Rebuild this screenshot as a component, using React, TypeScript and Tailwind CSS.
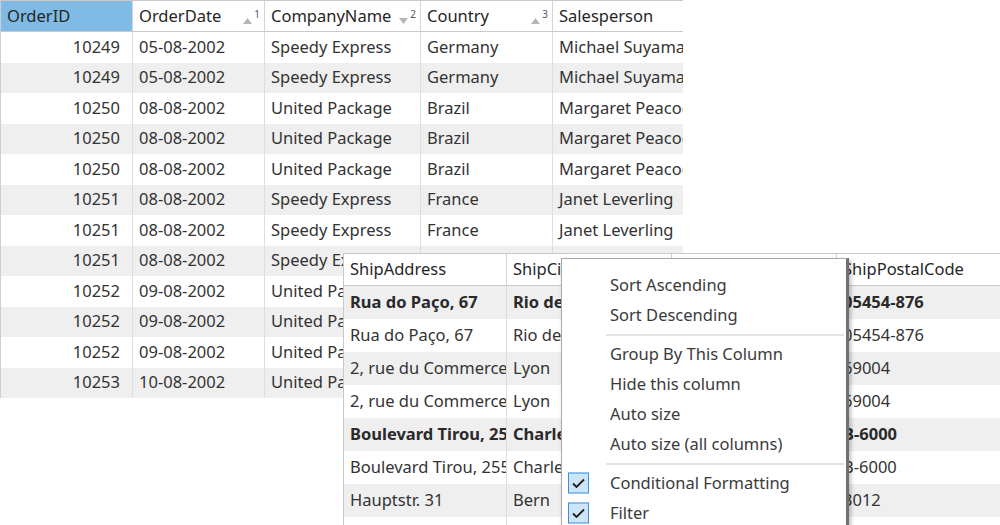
const font = { fontFamily: '"Noto Sans", "Open Sans", sans-serif' }

type Order = [string, string, string, string, string]

const orders: Order[] = [
  ['10249', '05-08-2002', 'Speedy Express', 'Germany', 'Michael Suyama'],
  ['10249', '05-08-2002', 'Speedy Express', 'Germany', 'Michael Suyama'],
  ['10250', '08-08-2002', 'United Package', 'Brazil', 'Margaret Peacock'],
  ['10250', '08-08-2002', 'United Package', 'Brazil', 'Margaret Peacock'],
  ['10250', '08-08-2002', 'United Package', 'Brazil', 'Margaret Peacock'],
  ['10251', '08-08-2002', 'Speedy Express', 'France', 'Janet Leverling'],
  ['10251', '08-08-2002', 'Speedy Express', 'France', 'Janet Leverling'],
  ['10251', '08-08-2002', 'Speedy Express', 'France', 'Janet Leverling'],
  ['10252', '09-08-2002', 'United Package', 'Belgium', 'Margaret Peacock'],
  ['10252', '09-08-2002', 'United Package', 'Belgium', 'Margaret Peacock'],
  ['10252', '09-08-2002', 'United Package', 'Belgium', 'Margaret Peacock'],
  ['10253', '10-08-2002', 'United Package', 'Brazil', 'Margaret Peacock'],
]

type Ship = { addr: string; city: string; region: string; code: string; bold?: boolean }

const ships: Ship[] = [
  { addr: 'Rua do Paço, 67', city: 'Rio de Janeiro', region: 'RJ', code: '05454-876', bold: true },
  { addr: 'Rua do Paço, 67', city: 'Rio de Janeiro', region: 'RJ', code: '05454-876' },
  { addr: '2, rue du Commerce', city: 'Lyon', region: '', code: '69004' },
  { addr: '2, rue du Commerce', city: 'Lyon', region: '', code: '69004' },
  { addr: 'Boulevard Tirou, 255', city: 'Charleroi', region: '', code: 'B-6000', bold: true },
  { addr: 'Boulevard Tirou, 255', city: 'Charleroi', region: '', code: 'B-6000' },
  { addr: 'Hauptstr. 31', city: 'Bern', region: '', code: '3012' },
  { addr: '', city: '', region: '', code: '' },
]

function SortMark({ dir, n }: { dir: 'up' | 'down'; n: number }) {
  return (
    <span className="ml-auto flex items-start gap-[2px] pr-[4px]">
      <svg width="9" height="6" viewBox="0 0 9 6" className="mt-[9px]">
        {dir === 'up' ? (
          <path d="M0 6 L4.5 0 L9 6 Z" fill="#b5b5b5" />
        ) : (
          <path d="M0 0 L4.5 6 L9 0 Z" fill="#b5b5b5" />
        )}
      </svg>
      <span className="text-[10px] leading-none text-[#555]">{n}</span>
    </span>
  )
}

function HeadCell({
  w,
  label,
  active,
  mark,
}: {
  w: string
  label: string
  active?: boolean
  mark?: { dir: 'up' | 'down'; n: number }
}) {
  return (
    <div
      className={`${w} flex h-full shrink-0 items-center overflow-hidden border-r border-[#d4d4d4] pl-[6px] ${
        active ? 'bg-[#7fbbe5]' : 'bg-white'
      }`}
    >
      <span className="whitespace-nowrap">{label}</span>
      {mark && <SortMark dir={mark.dir} n={mark.n} />}
    </div>
  )
}

function Cell({ w, children, right }: { w: string; children: string; right?: boolean }) {
  return (
    <div
      className={`${w} flex h-full shrink-0 items-center overflow-hidden whitespace-nowrap border-r border-[#dedede] ${
        right ? 'justify-end pr-[12px]' : 'pl-[6px]'
      }`}
    >
      {children}
    </div>
  )
}

function OrdersGrid() {
  return (
    <div className="w-[683px] overflow-hidden border-l border-[#cfcfcf] text-[16.5px] text-[#333]">
      <div className="flex h-[32px] border-t border-b border-[#c9c9c9] text-[#262626]">
        <HeadCell w="w-[132px]" label="OrderID" active />
        <HeadCell w="w-[132px]" label="OrderDate" mark={{ dir: 'up', n: 1 }} />
        <HeadCell w="w-[156px]" label="CompanyName" mark={{ dir: 'down', n: 2 }} />
        <HeadCell w="w-[132px]" label="Country" mark={{ dir: 'up', n: 3 }} />
        <HeadCell w="w-[140px]" label="Salesperson" />
      </div>
      {orders.map((o, i) => (
        <div key={i} className={`flex h-[30.5px] ${i % 2 === 1 ? 'bg-[#efefef]' : 'bg-white'}`}>
          <Cell w="w-[132px]" right>
            {o[0]}
          </Cell>
          <Cell w="w-[132px]">{o[1]}</Cell>
          <Cell w="w-[156px]">{o[2]}</Cell>
          <Cell w="w-[132px]">{o[3]}</Cell>
          <Cell w="w-[140px]">{o[4]}</Cell>
        </div>
      ))}
    </div>
  )
}

function ShipGrid() {
  return (
    <div className="absolute left-[343px] top-[253px] w-[657px] overflow-hidden border-l border-t border-[#c9c9c9] bg-white text-[16.5px] text-[#333]">
      <div className="flex h-[32px] border-b border-[#c9c9c9] text-[#262626]">
        <HeadCell w="w-[163px]" label="ShipAddress" />
        <HeadCell w="w-[165px]" label="ShipCity" />
        <HeadCell w="w-[165px]" label="ShipRegion" />
        <HeadCell w="w-[165px]" label="ShipPostalCode" />
      </div>
      {ships.map((s, i) => (
        <div
          key={i}
          className={`flex h-[33px] ${i % 2 === 0 ? 'bg-[#efefef]' : 'bg-white'} ${
            s.bold ? 'font-bold text-[#2a2a2a]' : ''
          }`}
        >
          <Cell w="w-[163px]">{s.addr}</Cell>
          <Cell w="w-[165px]">{s.city}</Cell>
          <Cell w="w-[165px]">{s.region}</Cell>
          <Cell w="w-[165px]">{s.code}</Cell>
        </div>
      ))}
    </div>
  )
}

function Check() {
  return (
    <span className="absolute left-[6px] top-1/2 flex h-[21px] w-[21px] -translate-y-1/2 items-center justify-center border border-[#3c8fdd] bg-[#cde5f8]">
      <svg width="13" height="10" viewBox="0 0 13 10">
        <path d="M1 5 L4.5 8.5 L12 1" fill="none" stroke="#1e1e1e" strokeWidth="1.8" />
      </svg>
    </span>
  )
}

function MenuItem({ label, checked }: { label: string; checked?: boolean }) {
  return (
    <div className="relative flex h-[30px] items-center pl-[48px] text-[#3a3a3a]">
      {checked && <Check />}
      <span className="whitespace-nowrap">{label}</span>
    </div>
  )
}

function Sep() {
  return (
    <div className="flex h-[9px] items-center pl-[44px] pr-[2px]">
      <div className="h-[2px] w-full bg-[#e3e3e3]" />
    </div>
  )
}

function ContextMenu() {
  return (
    <div className="absolute left-[561px] top-[258px] h-[280px] w-[288px] border border-r-[3px] border-[#a8a8a8] border-r-[#707070] bg-white pt-[11px] text-[16.5px] shadow-[2px_2px_4px_rgba(0,0,0,0.25)]">
      <MenuItem label="Sort Ascending" />
      <MenuItem label="Sort Descending" />
      <Sep />
      <MenuItem label="Group By This Column" />
      <MenuItem label="Hide this column" />
      <MenuItem label="Auto size" />
      <MenuItem label="Auto size (all columns)" />
      <Sep />
      <MenuItem label="Conditional Formatting" checked />
      <MenuItem label="Filter" checked />
    </div>
  )
}

export default function App() {
  return (
    <div className="relative h-[525px] w-[1000px] overflow-hidden bg-white" style={font}>
      <OrdersGrid />
      <ShipGrid />
      <ContextMenu />
    </div>
  )
}
